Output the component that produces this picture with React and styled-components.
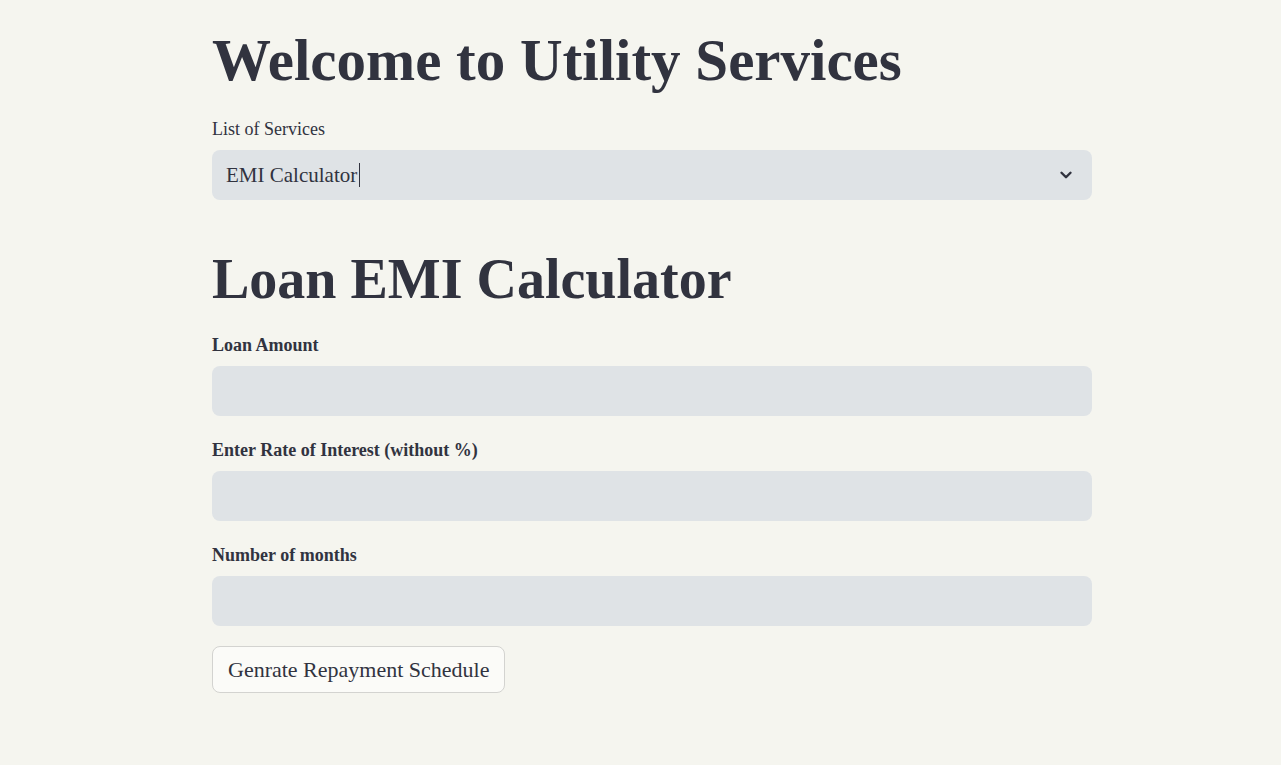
import React from "react";
import styled, { createGlobalStyle } from "styled-components";

const Global = createGlobalStyle`
  html, body { margin: 0; padding: 0; background: #f5f5ef; }
  body { font-family: "Liberation Serif", "DejaVu Serif", serif; color: #31333f; }
`;

const Page = styled.main`
  width: 880px;
  margin: 0 auto 0 212px;
  padding-top: 23px;
  display: flex;
  flex-direction: column;
`;

const Title = styled.h1`
  margin: ${(p) => p.$mt || 0}px 0 0;
  font-size: ${(p) => p.$size || 59}px;
  font-weight: 700;
  line-height: 74px;
  color: #31333f;
`;

const Field = styled.div`
  display: flex;
  flex-direction: column;
  margin-top: ${(p) => p.$mt || 0}px;
`;

const Label = styled.label`
  font-size: 18px;
  font-weight: ${(p) => (p.$bold ? 700 : 400)};
  line-height: 22px;
  color: #31333f;
  margin-bottom: 10px;
`;

const SelectBox = styled.div`
  height: 50px;
  background: #dfe3e6;
  border-radius: 8px;
  display: flex;
  align-items: center;
  padding: 0 14px;
  box-sizing: border-box;
  font-size: 21px;
  color: #31333f;
`;

const Caret = styled.span`
  display: inline-block;
  width: 1px;
  height: 24px;
  background: #31333f;
  margin-left: 2px;
`;

const Chevron = styled.svg`
  margin-left: auto;
  margin-right: 3px;
`;

const Input = styled.input`
  height: 50px;
  background: #dfe3e6;
  border: none;
  border-radius: 8px;
  outline: none;
  padding: 0 14px;
  box-sizing: border-box;
  font-family: inherit;
  font-size: 21px;
`;

const Button = styled.button`
  align-self: flex-start;
  margin-top: 20px;
  height: 47px;
  padding: 0 15px;
  background: #fbfbf8;
  border: 1px solid #d3d3d0;
  border-radius: 8px;
  font-family: inherit;
  font-size: 22px;
  color: #31333f;
`;

export default function App() {
  return (
    <>
      <Global />
      <Page>
        <Title>Welcome to Utility Services</Title>
        <Field $mt={21}>
          <Label>List of Services</Label>
          <SelectBox>
            EMI Calculator
            <Caret />
            <Chevron width="18" height="18" viewBox="0 0 24 24" fill="none" stroke="#31333f" strokeWidth="3.2" strokeLinecap="round" strokeLinejoin="round">
              <path d="M6 9l6 6 6-6" />
            </Chevron>
          </SelectBox>
        </Field>
        <Title $mt={42} $size={56}>Loan EMI Calculator</Title>
        <Field $mt={18}>
          <Label $bold>Loan Amount</Label>
          <Input />
        </Field>
        <Field $mt={23}>
          <Label $bold>Enter Rate of Interest (without %)</Label>
          <Input />
        </Field>
        <Field $mt={23}>
          <Label $bold>Number of months</Label>
          <Input />
        </Field>
        <Button>Genrate Repayment Schedule</Button>
      </Page>
    </>
  );
}
